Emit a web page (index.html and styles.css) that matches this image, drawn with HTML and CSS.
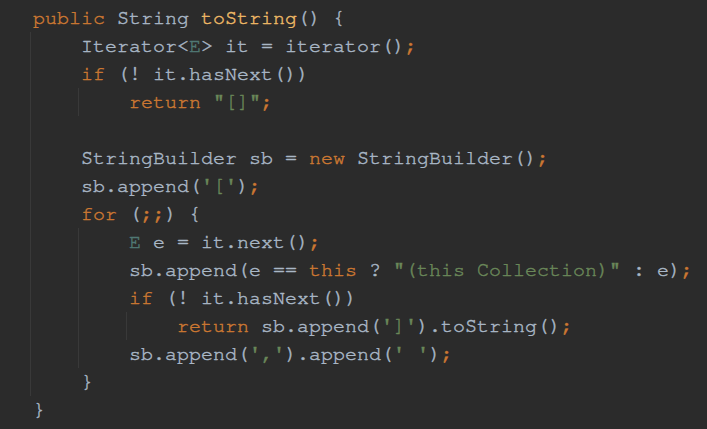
FILE: index.html
```html
<!DOCTYPE html>
<html>
<head>
<meta charset="utf-8">
<link rel="stylesheet" href="styles.css">
</head>
<body>
<div class="editor">
<div class="guide g1"></div>
<div class="guide g2"></div>
<div class="guide g3"></div>
<div class="guide g4"></div>
<pre class="code"><div class="ln"><span class="kw">public</span> String <span class="fn">toString</span>() {</div><div class="ln">    Iterator&lt;<span class="tp">E</span>&gt; it = iterator()<span class="kw">;</span></div><div class="ln">    <span class="kw">if</span> (! it.hasNext())</div><div class="ln">        <span class="kw">return</span> <span class="str">"[]"</span><span class="kw">;</span></div><div class="ln"> </div><div class="ln">    StringBuilder sb = <span class="kw">new</span> StringBuilder()<span class="kw">;</span></div><div class="ln">    sb.append(<span class="str">'['</span>)<span class="kw">;</span></div><div class="ln">    <span class="kw">for</span> (<span class="kw">;;</span>) {</div><div class="ln">        <span class="tp">E</span> e = it.next()<span class="kw">;</span></div><div class="ln">        sb.append(e == <span class="kw">this</span> ? <span class="str">"(this Collection)"</span> : e)<span class="kw">;</span></div><div class="ln">        <span class="kw">if</span> (! it.hasNext())</div><div class="ln">            <span class="kw">return</span> sb.append(<span class="str">']'</span>).toString()<span class="kw">;</span></div><div class="ln">        sb.append(<span class="str">','</span>).append(<span class="str">' '</span>)<span class="kw">;</span></div><div class="ln">    }</div><div class="ln">}</div></pre>
</div>
</body>
</html>
```

FILE: styles.css
```css
html, body {
  margin: 0;
  padding: 0;
  background: #2b2b2b;
}

.editor {
  position: relative;
  width: 707px;
  height: 429px;
  overflow: hidden;
  background: #2b2b2b;
}

.code {
  margin: 0;
  padding: 4px 0 0 33px;
  font-family: "Nimbus Mono PS", "Nimbus Mono L", "FreeMono", "Courier New", "Liberation Mono", monospace;
  font-size: 20px;
  line-height: 28px;
  color: #a9b7c6;
  white-space: pre;
  -webkit-text-stroke: 0.45px currentColor;
}

.ln {
  height: 28px;
}

.kw { color: #cc7832; }
.fn { color: #efb966; }
.str { color: #6a8759; }
.tp { color: #507874; }

.guide {
  position: absolute;
  width: 1px;
  background: #393939;
}

.g1 { left: 30px; top: 32px; height: 364px; }
.g2 { left: 78px; top: 88px; height: 28px; }
.g3 { left: 78px; top: 228px; height: 140px; }
.g4 { left: 126px; top: 312px; height: 28px; }
```
